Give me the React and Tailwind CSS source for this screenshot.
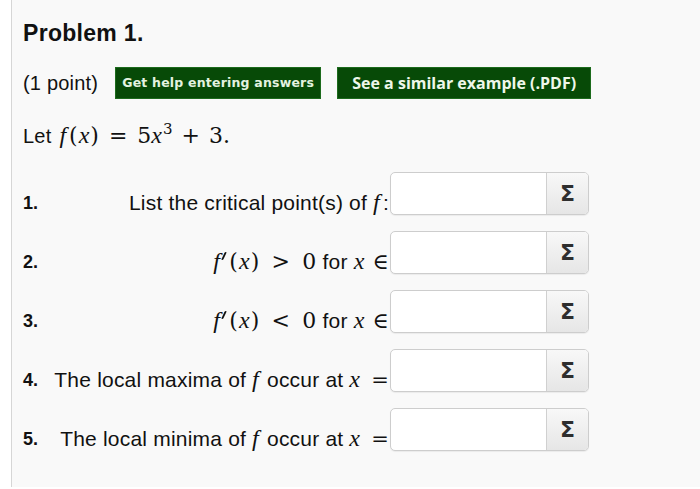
import React from "react";

const sans = { fontFamily: '"Liberation Sans", Arial, sans-serif' };
const serif = { fontFamily: '"DejaVu Serif", "Liberation Serif", serif' };
const italic = { fontFamily: '"Liberation Serif", "Times New Roman", serif' };

function M({ children, className = "" }) {
  // TeX-like italic variable
  return (
    <span className={`text-[24px] italic ${className}`} style={italic}>
      {children}
    </span>
  );
}

function R({ children, className = "" }) {
  return (
    <span className={className} style={serif}>
      {children}
    </span>
  );
}

function Prime() {
  return <span className="relative -top-[9px] ml-[3px] inline-block h-[8px] w-[2px] -skew-x-[25deg] rounded-[1px] bg-[#111]" />;
}

function AnswerBox() {
  return (
    <div className="flex h-[43px] w-[199px] shrink-0 overflow-hidden rounded-[5px] border border-[#cdcdcd] bg-white shadow-[0_1px_1px_rgba(0,0,0,0.06)]">
      <div className="flex-1" />
      <div className="flex w-[42px] items-center justify-center border-l border-[#d0d0d0] bg-gradient-to-b from-[#f8f8f8] to-[#e6e6e6]">
        <span className="text-[22px] font-bold leading-none text-[#2e2e2e]" style={{ fontFamily: '"DejaVu Sans", sans-serif' }}>
          Σ
        </span>
      </div>
    </div>
  );
}

function Row({ num, children }) {
  return (
    <div className="flex items-end">
      <span className="w-[29px] shrink-0 text-[18px] font-bold leading-[24px] text-[#111]">{num}</span>
      <div className="mr-[1px] flex-1 whitespace-nowrap text-right text-[21px] leading-[24px] tracking-[0.2px] text-[#111]">
        {children}
      </div>
      <AnswerBox />
    </div>
  );
}

function Deriv({ op }) {
  return (
    <>
      <M>f</M>
      <Prime />
      <R className="ml-[4px] text-[22px]">(</R>
      <M className="mx-[1px]">x</M>
      <R className="text-[22px]">)</R>
      <R className="mx-[12px] text-[22px]">{op}</R>
      <R className="text-[22px]">0</R> for <M>x</M>
      <R className="ml-[8px] text-[22px]">∈</R>
    </>
  );
}

export default function App() {
  return (
    <div className="h-[489px] w-[700px] overflow-hidden bg-white" style={sans}>
      <div className="ml-[11px] h-[487px] border-l border-[#d6d6d6] bg-[#f9f9f9] pl-[11px] pt-[20px]">
        <h1 className="text-[23px] font-bold leading-[26px] tracking-[0.3px] text-[#111]">Problem 1.</h1>

        <div className="mt-[21px] flex items-center">
          <span className="text-[20px] leading-[24px] tracking-[0.2px] text-[#111]">(1 point)</span>
          <div
            className="ml-[17px] flex h-[32px] w-[206px] items-center justify-center border border-[#1d6b1d] bg-[#074a07] text-[12.5px] font-bold tracking-[0.2px] text-[#e4f3e0]"
            style={{ fontFamily: '"DejaVu Sans", sans-serif' }}
          >
            Get help entering answers
          </div>
          <div
            className="ml-[16px] flex h-[32px] w-[254px] items-center justify-center border border-[#1d6b1d] bg-[#074a07] text-[16px] font-bold text-[#eef7ea]"
            style={{ fontFamily: '"Open Sans", sans-serif' }}
          >
            See a similar example (.PDF)
          </div>
        </div>

        <div className="mt-[22px] flex items-baseline text-[20px] leading-[28px] text-[#111]">
          <span className="tracking-[0.2px]">Let</span>
          <span className="ml-[8px] text-[22px]">
            <M className="mr-[3px]">f</M>
            <R>(</R>
            <M className="mx-[1px]">x</M>
            <R>)</R>
            <R className="mx-[10px]">=</R>
            <R>5</R>
            <M>x</M>
            <R className="relative -top-[9px] ml-[1px] text-[15px]">3</R>
            <R className="mx-[9px]">+</R>
            <R>3.</R>
          </span>
        </div>

        <div className="mt-[20px] flex w-[566px] flex-col gap-[16px]">
          <Row num="1.">
            List the critical point(s) of <M className="mr-[3px]">f</M>:
          </Row>
          <Row num="2.">
            <Deriv op="&gt;" />
          </Row>
          <Row num="3.">
            <Deriv op="&lt;" />
          </Row>
          <Row num="4.">
            The local maxima of <M className="mr-[2px]">f</M> occur at <M>x</M>
            <R className="ml-[11px]">=</R>
          </Row>
          <Row num="5.">
            The local minima of <M className="mr-[2px]">f</M> occur at <M>x</M>
            <R className="ml-[11px]">=</R>
          </Row>
        </div>
      </div>
    </div>
  );
}
